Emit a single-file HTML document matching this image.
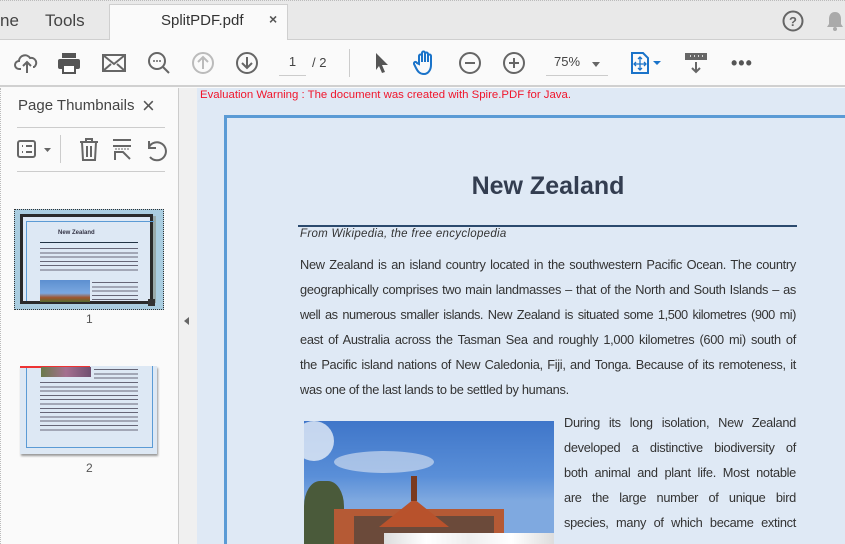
<!DOCTYPE html>
<html><head><meta charset="utf-8"><style>
*{margin:0;padding:0;box-sizing:border-box}
body{width:845px;height:544px;overflow:hidden;position:relative;background:#fafafa;font-family:"Liberation Sans",sans-serif}
.abs{position:absolute}
.tabbar{left:0;top:0;width:845px;height:40px;background:#e9e9e9;border-bottom:1px solid #cfcfcf;border-top:1px dotted #bbb}
.tab{top:4px;left:109px;width:179px;height:36px;background:#fafafa;border:1px solid #cfcfcf;border-bottom:none}
.toolbar{left:0;top:40px;width:845px;height:47px;background:#fafafa;border-bottom:2px solid #d0d0d0}
.ic{stroke:#666;fill:none;stroke-width:2}
.line{position:absolute;left:300px;width:496px;font-size:12.8px;color:#333;text-align:justify;text-align-last:justify;white-space:nowrap;letter-spacing:-0.3px}
.l2{left:564px;width:232px}
</style></head><body>
<div class="abs tabbar"></div>
<div class="abs" style="left:0;top:11px;font-size:17px;color:#444">ne</div>
<div class="abs" style="left:45px;top:11px;font-size:17px;color:#444">Tools</div>
<div class="abs tab"></div>
<div class="abs" style="left:161px;top:12px;font-size:15px;color:#333">SplitPDF.pdf</div>
<div class="abs" style="left:269px;top:11px;font-size:14px;color:#555;font-weight:bold">×</div>
<svg class="abs" style="left:782px;top:10px" width="22" height="22"><circle cx="11" cy="11" r="9.5" stroke="#666" stroke-width="2" fill="none"/><text x="11" y="16" font-size="13" font-weight="bold" text-anchor="middle" fill="#666" font-family="Liberation Sans">?</text></svg>
<svg class="abs" style="left:825px;top:10px" width="20" height="22"><path d="M10 2c-4 0-6 3-6 7v5l-2 3h16l-2-3V9c0-4-2-7-6-7z" fill="#aaa"/><circle cx="10" cy="19" r="2" fill="#aaa"/></svg>

<div class="abs toolbar"></div>
<svg class="abs" style="left:14px;top:51px" width="26" height="24"><path class="ic" d="M7 18H5a4 4 0 0 1 0-8 6 6 0 0 1 11-3 5 5 0 0 1 4 9h-1M13 22V11M9 15l4-4 4 4"/></svg>
<svg class="abs" style="left:57px;top:52px" width="24" height="22"><rect x="5" y="1" width="14" height="5" fill="#555"/><rect x="1" y="7" width="22" height="10" rx="2" fill="#555"/><rect x="6" y="13" width="12" height="8" fill="#fff" stroke="#555" stroke-width="2"/></svg>
<svg class="abs" style="left:102px;top:54px" width="24" height="18"><rect x="1" y="1" width="22" height="16" class="ic"/><path class="ic" d="M1 1l11 9 11-9M1 17l8-7M23 17l-8-7" stroke-width="1.5"/></svg>
<svg class="abs" style="left:147px;top:51px" width="24" height="24"><circle cx="10" cy="10" r="8" class="ic"/><path class="ic" d="M16 16l6 6" stroke-width="2.5"/><circle cx="7" cy="10" r="1" fill="#666"/><circle cx="10" cy="10" r="1" fill="#666"/><circle cx="13" cy="10" r="1" fill="#666"/></svg>
<svg class="abs" style="left:191px;top:51px" width="24" height="24"><circle cx="12" cy="12" r="10" stroke="#bbb" stroke-width="2" fill="none"/><path d="M12 18V7M7 11l5-5 5 5" stroke="#bbb" stroke-width="2" fill="none"/></svg>
<svg class="abs" style="left:235px;top:51px" width="24" height="24"><circle cx="12" cy="12" r="10" class="ic"/><path class="ic" d="M12 6v11M7 12l5 5 5-5"/></svg>
<div class="abs" style="left:279px;top:54px;width:27px;height:22px;border-bottom:1px solid #ccc;text-align:center;font-size:13px;color:#444">1</div>
<div class="abs" style="left:312px;top:55px;font-size:13px;color:#444">/ 2</div>
<div class="abs" style="left:349px;top:49px;width:1px;height:28px;background:#ccc"></div>
<svg class="abs" style="left:372px;top:51px" width="20" height="24"><path d="M4 2l12 12h-6l3 7-3 1-3-7-3 4z" fill="#555"/></svg>
<svg class="abs" style="left:413px;top:50px" width="26" height="26"><path d="M6 14V6a1.5 1.5 0 0 1 3 0v6V3a1.5 1.5 0 0 1 3 0v9V4a1.5 1.5 0 0 1 3 0v8V6a1.5 1.5 0 0 1 3 0v9c0 5-3 9-7 9s-6-2-8-6l-2-4a1.5 1.5 0 0 1 3-1z" stroke="#1a73c9" stroke-width="2" fill="none"/></svg>
<svg class="abs" style="left:458px;top:51px" width="24" height="24"><circle cx="12" cy="12" r="10" class="ic"/><path class="ic" d="M7 12h10"/></svg>
<svg class="abs" style="left:502px;top:51px" width="24" height="24"><circle cx="12" cy="12" r="10" class="ic"/><path class="ic" d="M7 12h10M12 7v10"/></svg>
<div class="abs" style="left:546px;top:54px;width:62px;height:22px;border-bottom:1px solid #ccc;font-size:13px;color:#444;padding-left:8px">75%</div>
<div class="abs" style="left:592px;top:62px;border:4px solid transparent;border-top:5px solid #666"></div>
<svg class="abs" style="left:630px;top:52px" width="32" height="22"><path d="M2 1h11l5 5v15H2z" stroke="#1a73c9" stroke-width="2" fill="none"/><path d="M10 5v13M4 12h12M8 7l2-2 2 2M8 16l2 2 2-2M6 10l-2 2 2 2M14 10l2 2-2 2" stroke="#1a73c9" stroke-width="1.3" fill="none"/><path d="M23 9h8l-4 4z" fill="#1a73c9"/></svg>
<svg class="abs" style="left:684px;top:52px" width="24" height="22"><rect x="1" y="1" width="22" height="7" fill="#666"/><path d="M6 4h1M10 4h1M14 4h1M18 4h1" stroke="#fff" stroke-width="1.5"/><path class="ic" d="M12 10v10M8 16l4 4 4-4"/></svg>
<div class="abs" style="left:731px;top:53px;font-size:18px;color:#555;letter-spacing:1px;font-weight:bold">•••</div>

<div class="abs" style="left:0;top:88px;width:179px;height:456px;background:#fafafa;border-right:1px solid #ccc;border-left:1px dotted #bbb"></div>
<div class="abs" style="left:18px;top:97px;font-size:15px;color:#444">Page Thumbnails</div>
<div class="abs" style="left:142px;top:93px;font-size:22px;color:#555">×</div>
<div class="abs" style="left:17px;top:127px;width:148px;height:1px;background:#ccc"></div>
<div class="abs" style="left:17px;top:171px;width:148px;height:1px;background:#ccc"></div>
<svg class="abs" style="left:17px;top:140px" width="40" height="20"><rect x="1" y="1" width="17" height="16" rx="2" class="ic"/><path d="M5 6h1M5 12h1M9 6h6M9 12h6" stroke="#666" stroke-width="2"/><path d="M27 8h7l-3.5 4z" fill="#666"/></svg>
<div class="abs" style="left:60px;top:135px;width:1px;height:28px;background:#ccc"></div>
<svg class="abs" style="left:78px;top:138px" width="22" height="24"><path class="ic" d="M2 4h18M8 4V1h6v3M4 4l1 18h12l1-18M9 8v11M13 8v11"/></svg>
<svg class="abs" style="left:112px;top:138px" width="22" height="24"><path d="M1 2h18M1 8h18" stroke="#666" stroke-width="2"/><path d="M3 11h15" stroke="#666" stroke-dasharray="2 1"/><path class="ic" d="M3 22v-8h8l3 3 4 4"/></svg>
<svg class="abs" style="left:145px;top:138px" width="22" height="24"><path class="ic" d="M5 19a9 9 0 1 0-1-10M4 3v7h7" stroke-width="2.2"/></svg>

<div class="abs" style="left:14px;top:209px;width:150px;height:101px;background:#aacde0;border:1px dotted #333"></div>
<div class="abs" style="left:26px;top:216px;width:130px;height:87px;background:#9aa;"></div>
<div class="abs" style="left:20px;top:214px;width:133px;height:90px;background:#dde8f4;border:3px solid #2a2a2a"></div>
<div class="abs" style="left:26px;top:221px;width:128px;height:80px;border:1px solid #5b9bd5;border-right:none;border-bottom:none"></div>
<div class="abs" style="left:58px;top:230px;font-size:6px;font-weight:bold;color:#334">New Zealand</div>
<div class="abs" style="left:40px;top:242px;width:98px;height:1px;background:#234"></div>
<div class="abs" style="left:40px;top:246px;width:98px;height:26px;background:repeating-linear-gradient(#dde8f4 0 2px,#667 2px 3px,#dde8f4 3px 4.3px)"></div>
<div class="abs" style="left:40px;top:280px;width:50px;height:22px;background:linear-gradient(#5d8fd0,#7aa8e0 60%,#a0552e 80%,#556b2f)"></div>
<div class="abs" style="left:92px;top:280px;width:46px;height:20px;background:repeating-linear-gradient(#dde8f4 0 2px,#667 2px 3px,#dde8f4 3px 4.3px)"></div>
<div class="abs" style="left:148px;top:299px;width:7px;height:7px;background:#333"></div>
<div class="abs" style="left:86px;top:312px;font-size:12px;color:#555">1</div>
<div class="abs" style="left:20px;top:366px;width:137px;height:88px;background:#dde8f4;box-shadow:1px 2px 2px #999"></div>
<div class="abs" style="left:26px;top:366px;width:127px;height:82px;border:1px solid #5b9bd5;border-top:none"></div>
<div class="abs" style="left:20px;top:366px;width:70px;height:2px;background:#e33"></div>
<div class="abs" style="left:41px;top:367px;width:50px;height:10px;background:linear-gradient(90deg,#6a7a4a,#a57090,#705070)"></div>
<div class="abs" style="left:94px;top:367px;width:44px;height:12px;background:repeating-linear-gradient(#dde8f4 0 2px,#667 2px 3px,#dde8f4 3px 4.3px)"></div>
<div class="abs" style="left:40px;top:380px;width:98px;height:53px;background:repeating-linear-gradient(#dde8f4 0 2px,#667 2px 3px,#dde8f4 3px 4.3px)"></div>
<div class="abs" style="left:86px;top:461px;font-size:12px;color:#555">2</div>

<div class="abs" style="left:179px;top:88px;width:18px;height:456px;background:#f0f0f0"></div>
<div class="abs" style="left:184px;top:317px;border:4px solid transparent;border-right:5px solid #666;border-left:none"></div>

<div class="abs" style="left:197px;top:88px;width:648px;height:456px;background:#dfe9f5"></div>
<div class="abs" style="left:200px;top:89px;font-size:11.4px;color:#f0152b">Evaluation Warning : The document was created with Spire.PDF for Java.</div>
<div class="abs" style="left:224px;top:115px;width:621px;height:429px;border-left:3px solid #5b9bd5;border-top:3px solid #5b9bd5"></div>
<div class="abs" style="left:300px;top:172px;width:496px;text-align:center;font-size:25px;font-weight:bold;color:#333d50">New Zealand</div>
<div class="abs" style="left:298px;top:225px;width:499px;height:2px;background:#2b4a6e"></div>
<div class="abs" style="left:300px;top:228px;font-size:11.5px;font-style:italic;color:#333;letter-spacing:0.3px">From Wikipedia, the free encyclopedia</div>
<div class="line" style="top:257px">New Zealand is an island country located in the southwestern Pacific Ocean. The country</div>
<div class="line" style="top:282px">geographically comprises two main landmasses – that of the North and South Islands – as</div>
<div class="line" style="top:307px;letter-spacing:-0.45px">well as numerous smaller islands. New Zealand is situated some 1,500 kilometres (900 mi)</div>
<div class="line" style="top:332px">east of Australia across the Tasman Sea and roughly 1,000 kilometres (600 mi) south of</div>
<div class="line" style="top:357px">the Pacific island nations of New Caledonia, Fiji, and Tonga. Because of its remoteness, it</div>
<div class="line" style="top:382px;text-align-last:left">was one of the last lands to be settled by humans.</div>
<div class="line l2" style="top:415px">During its long isolation, New Zealand</div>
<div class="line l2" style="top:440px">developed a distinctive biodiversity of</div>
<div class="line l2" style="top:465px">both animal and plant life. Most notable</div>
<div class="line l2" style="top:490px">are the large number of unique bird</div>
<div class="line l2" style="top:515px">species, many of which became extinct</div>
<div class="abs" style="left:304px;top:421px;width:250px;height:123px;background:linear-gradient(#3f76c9,#5a8fd8 45%,#7fa9e0 65%);overflow:hidden">
<div class="abs" style="left:30px;top:30px;width:100px;height:22px;background:#dfe8f3;border-radius:50%;opacity:.6"></div>
<div class="abs" style="left:-10px;top:0;width:40px;height:40px;background:#e6eef8;border-radius:50%;opacity:.8"></div>
<div class="abs" style="left:0;top:60px;width:40px;height:63px;background:#4a5a3a;border-radius:40% 40% 0 0"></div>
<div class="abs" style="left:30px;top:88px;width:170px;height:35px;background:#b55a35"></div>
<div class="abs" style="left:50px;top:95px;width:140px;height:28px;background:#6b4a3a"></div>
<div class="abs" style="left:75px;top:78px;width:0;height:0;border:35px solid transparent;border-bottom:28px solid #b8522c;border-top:none"></div>
<div class="abs" style="left:107px;top:55px;width:6px;height:25px;background:#7a3a20"></div>
<div class="abs" style="left:265px;top:75px;width:20px;height:48px;background:#2f4a25;border-radius:50% 50% 0 0"></div>
<div class="abs" style="left:268px;top:70px;width:40px;height:25px;background:#2f4a25;border-radius:50%"></div>
<div class="abs" style="left:270px;top:70px"></div>
<div class="abs" style="left:248px;top:80px;width:2px;height:0"></div>
<div class="abs" style="left:80px;top:112px;width:170px;height:11px;background:linear-gradient(90deg,#ddd,#fff,#eee,#fff,#ddd)"></div>
</div>
</body></html>
